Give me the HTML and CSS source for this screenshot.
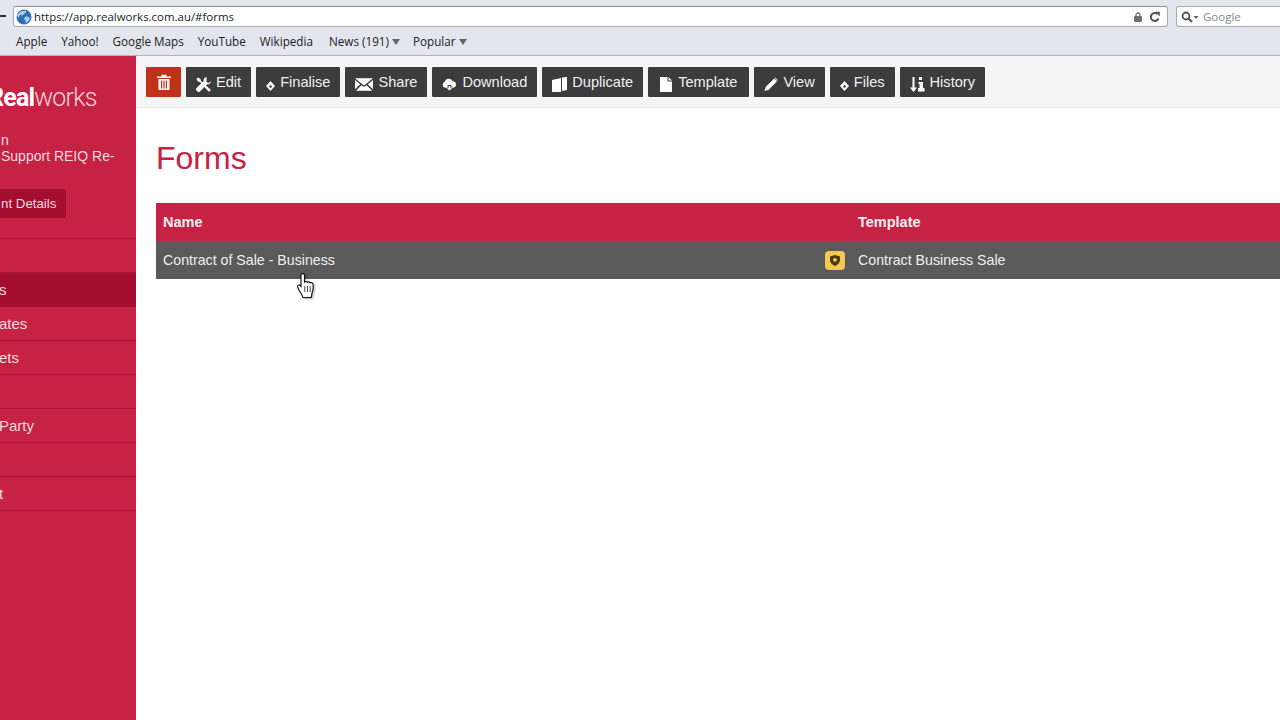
FILE: index.html
```html
<!DOCTYPE html>
<html lang="en">
<head>
<meta charset="utf-8">
<title>Forms</title>
<link rel="stylesheet" href="styles.css">
</head>
<body>
<header class="chrome">
  <div class="address-row">
    <span class="back"></span>
    <div class="urlbar">
      <svg class="globe" width="16" height="16" viewBox="0 0 16 16"><circle cx="8" cy="8" r="7.5" fill="#2f6fb5"/><path d="M3 4c2-2 5-2.500 7-2 1 1-1 2-2 3s-2 2-3 1-1 0-2 2-2-2-2-2zM9 8c2-1 4 0 5 1 0 2-2 4-4 5-1-1 0-2-1-3s-1-2 0-3z" fill="#a9cfee"/></svg>
      <span class="url">https://app.realworks.com.au/#forms</span>
      <span class="spacer"></span>
      <svg class="lock" width="8" height="10" viewBox="0 0 8 10"><rect x="0" y="4" width="8" height="6" rx="1" fill="#6f6f6f"/><path d="M2 4.500V3a2 2 0 0 1 4 0v1.500" fill="none" stroke="#6f6f6f" stroke-width="1.300"/></svg>
      <svg class="reload" width="12" height="12" viewBox="0 0 12 12"><path d="M9.500 7.500A4 4 0 1 1 8.500 3" fill="none" stroke="#555" stroke-width="2"/><path d="M6.500 0.500 11 1l-.5 4.500z" fill="#555"/></svg>
    </div>
    <div class="searchbar">
      <svg width="18" height="12" viewBox="0 0 18 12"><circle cx="5" cy="5" r="3.500" fill="none" stroke="#555" stroke-width="1.800"/><path d="M7.500 7.500 11 11" stroke="#555" stroke-width="2.200"/><path d="M12.500 5h5L15 8z" fill="#666"/></svg>
      <span>Google</span>
    </div>
  </div>
  <nav class="bookmarks">
    <a>Apple</a><a>Yahoo!</a><a>Google Maps</a><a>YouTube</a><a>Wikipedia</a>
    <a class="menu news">News (191)<i class="caret"></i></a><a class="menu">Popular<i class="caret"></i></a>
  </nav>
</header>

<div class="app">
  <aside class="sidebar">
    <div class="logo"><b>Real</b>works</div>
    <div class="account">
      <div>n</div>
      <div>Support REIQ Re-</div>
    </div>
    <a class="details">nt Details</a>
    <ul class="side-nav">
      <li></li>
      <li class="active">s</li>
      <li>ates</li>
      <li>ets</li>
      <li></li>
      <li>Party</li>
      <li></li>
      <li>t</li>
    </ul>
  </aside>

  <main class="main">
    <div class="toolbar">
      <button class="btn danger" aria-label="Delete">
        <svg width="14" height="16" viewBox="0 0 14 16"><path d="M0 2.500h14V4H0zM4.500 2.500V.8h5v1.700" fill="#fff"/><path d="M1.500 5h11v11h-11zM4 6.500v8h1.200v-8zM6.400 6.500v8h1.200v-8zM8.800 6.500v8H10v-8z" fill="#fff" fill-rule="evenodd"/></svg>
      </button>
      <button class="btn">
        <svg class="low" width="15" height="15" viewBox="0 0 15 15"><path d="M0.500 2 2 .5l2.500 1.500.5 2L14.500 12.500v1l-1 1h-1L4 5 2 4.500z" fill="#fff"/><path d="M10.500 0c-2 .3-3.200 2-2.800 4L.5 11c-.7.700-.7 1.800 0 2.500l1 1c.7.700 1.800.700 2.500 0L11 7.300c2 .4 3.700-.8 4-2.800l-2.500 1.500-2-1V3z" fill="#fff"/></svg>
        Edit
      </button>
      <button class="btn">
        <svg class="tiny" width="9" height="10" viewBox="0 0 9 10"><path d="M4.500 0 9 5 4.500 10 0 5z" fill="#fff"/><circle cx="4.500" cy="5.500" r="1.300" fill="#3c3c3c"/></svg>
        Finalise
      </button>
      <button class="btn">
        <svg width="18" height="13" viewBox="0 0 19 13" class="low"><path d="M0 0h19L9.500 7.500zM0 1.800l5.500 4.500L0 11.500zM19 1.800l-5.500 4.500 5.500 5.200zM6.800 7.200l2.700 2 2.700-2 6 5.800H1z" fill="#fff"/></svg>
        Share
      </button>
      <button class="btn">
        <svg width="15" height="13" viewBox="0 0 16 13" class="low"><path d="M3.500 10A3.300 3.300 0 0 1 3 3.600 4.500 4.500 0 0 1 11.500 3 3.600 3.600 0 0 1 12.500 10H10V7H6v3z" fill="#fff"/><path d="M7 8h2v2.500h2L8 13l-3-2.500h2z" fill="#fff"/></svg>
        Download
      </button>
      <button class="btn">
        <svg width="15" height="15" viewBox="0 0 15 15" class="low"><path d="M0 3 9 1v14H0z" fill="#fff"/><path d="M10 .5l5-.5v13l-5 1z" fill="#fff"/></svg>
        Duplicate
      </button>
      <button class="btn wide">
        <svg width="12" height="15" viewBox="0 0 12 15" class="low"><path d="M0 0h7.500v4.500H12V15H0zM8.500 0 12 3.500H8.500z" fill="#fff"/></svg>
        Template
      </button>
      <button class="btn">
        <svg width="14" height="15" viewBox="0 0 15 15" class="low"><path d="M11 1l3 3-9 9-4.500 1.500L2 10zM12 0l3 3-.5.500-3-3z" fill="#fff"/></svg>
        View
      </button>
      <button class="btn">
        <svg class="tiny" width="9" height="10" viewBox="0 0 9 10"><path d="M4.500 0 9 5 4.500 10 0 5z" fill="#fff"/><circle cx="4.500" cy="5.500" r="1.300" fill="#3c3c3c"/></svg>
        Files
      </button>
      <button class="btn">
        <svg width="15" height="15" viewBox="0 0 15 15" class="low"><path d="M2.500 0h2v10.500H7L3.500 15 0 10.500h2.500z" fill="#fff"/><path d="M9 0h3v3H9zM8.500 5H13v6h1.500v3.500H8V11h1.500V7h-1z" fill="#fff"/></svg>
        History
      </button>
    </div>

    <section class="content">
      <h1>Forms</h1>
      <div class="table">
        <div class="table-head">
          <div class="cell">Name</div>
          <div class="cell">Template</div>
        </div>
        <div class="table-row">
          <div class="cell name-cell">
            <span>Contract of Sale - Business</span>
            <span class="badge">
              <svg width="10" height="11" viewBox="0 0 10 11"><path d="M5 0 10 1.500V5c0 3-2.500 5-5 6C2.500 10 0 8 0 5V1.500z" fill="#4a3a10"/><circle cx="5" cy="4.800" r="1.900" fill="#f3c950"/></svg>
            </span>
          </div>
          <div class="cell">Contract Business Sale</div>
        </div>
      </div>
    </section>
  </main>
</div>

<svg class="pointer" width="18" height="26" viewBox="0 0 18 26"><path d="M4 1.500c.8-1.300 3-1.300 3.500.5V9c1-.8 2.200-.6 2.800.3.900-.7 2.200-.5 2.700.5 1-.5 2.800 0 3 1.500.3 3 .2 6.200-1 8.700l-.7 4.500H6c-.5-2.500-2-4-3.500-6.500C1.500 16 0 14 .8 12.500c.8-1 2-.5 3.200 1z" fill="#fff" stroke="#111" stroke-width="1.100"/><path d="M7.800 13v6M10.500 13v6M13.200 13v6" stroke="#333" stroke-width=".9"/></svg>
</body>
</html>
```

FILE: styles.css
```css
* { box-sizing: border-box; }
html, body { margin: 0; height: 100%; overflow: hidden; }
body {
  width: 1280px;
  height: 720px;
  display: flex;
  flex-direction: column;
  font-family: "Liberation Sans", Arial, sans-serif;
  background: #fff;
  position: relative;
}

/* Browser chrome */
.chrome {
  height: 56px;
  flex: none;
  background: #e4e6ef;
  border-bottom: 1px solid #b4b5bb;
  padding-top: 6px;
}
.address-row {
  height: 21px;
  display: flex;
  align-items: stretch;
}
.back {
  width: 6px;
  height: 2px;
  margin-top: 9px;
  background: #333;
  flex: none;
}
.urlbar {
  margin-left: 7px;
  width: 1155px;
  background: #fff;
  border: 1px solid #a9aab0;
  border-top-color: #8f9095;
  border-radius: 3px;
  display: flex;
  align-items: center;
  padding: 0 6px 0 2px;
  font: 11.450px "Open Sans", sans-serif;
  color: #222;
}
.globe { margin-right: 2px; flex: none; }
.spacer { flex: 1; }
.lock { margin-right: 7px; }
.searchbar {
  margin-left: 8px;
  flex: 1;
  background: #fff;
  border: 1px solid #a9aab0;
  border-right: 0;
  border-radius: 3px 0 0 3px;
  display: flex;
  align-items: center;
  gap: 4px;
  padding-left: 4px;
  font: 11.500px "Open Sans", sans-serif;
  color: #85878c;
}
.bookmarks {
  height: 28px;
  display: flex;
  align-items: center;
  padding-left: 16px;
  gap: 14px;
  font: 11.700px "Open Sans", sans-serif;
  color: #222;
}
.bookmarks .news { margin-left: 2px; margin-right: -1px; }
.caret {
  display: inline-block;
  width: 0;
  height: 0;
  margin-left: 3px;
  border: 4px solid transparent;
  border-top: 6px solid #666;
  border-bottom: 0;
  vertical-align: 1px;
}

/* App */
.app { flex: 1; display: flex; min-height: 0; }
.sidebar {
  width: 136px;
  flex: none;
  background: #c62243;
  color: #fbe3e8;
  overflow: hidden;
}
.logo {
  margin: 29px 0 0 -12px;
  font: 300 25px/26px Roboto, sans-serif;
  letter-spacing: -0.8px;
  white-space: nowrap;
  color: #f6d3da;
}
.logo b { font-weight: 700; color: #fff; }
.account {
  margin-top: 21px;
  font-size: 14px;
  line-height: 16px;
  padding-left: 1px;
  color: #f7d9df;
}
.details {
  display: block;
  width: 66px;
  height: 29px;
  margin-top: 25px;
  background: #a30d30;
  border-radius: 0 2px 2px 0;
  font-size: 13.300px;
  line-height: 29px;
  padding-left: 1px;
  white-space: nowrap;
  color: #f7d9df;
}
.side-nav {
  list-style: none;
  margin: 20px 0 0;
  padding: 0;
  border-top: 1px solid #ab1233;
}
.side-nav li {
  height: 34px;
  line-height: 34px;
  font-size: 15px;
  text-indent: -1px;
  border-bottom: 1px solid #ab1233;
  color: #f7d9df;
}
.side-nav li.active { background: #a30d30; border-bottom-color: #a30d30; }

/* Main */
.main { flex: 1; min-width: 0; overflow: hidden; }
.toolbar {
  height: 52px;
  background: #f5f5f5;
  border-bottom: 1px solid #ececec;
  padding: 11px 0 0 10px;
  display: flex;
  gap: 5px;
  align-items: flex-start;
}
.btn {
  height: 30px;
  display: flex;
  align-items: center;
  gap: 5px;
  padding: 0 10px;
  border: 0;
  border-radius: 1px;
  background: #3c3c3c;
  color: #f0f0f0;
  font: 14.600px "Liberation Sans", Arial, sans-serif;
  white-space: nowrap;
}
.btn.danger { width: 35px; justify-content: center; background: #c0311a; padding: 0; }
.btn.wide { padding: 0 12px; gap: 6px; }
.btn svg { flex: none; }
.btn svg.low { margin-top: 4px; }
.btn svg.tiny { margin-top: 7px; }

.content { padding: 32px 0 0 20px; }
h1 {
  margin: 0 0 26px;
  font-size: 32px;
  line-height: 37px;
  font-weight: 400;
  color: #c62243;
}
.table { font-size: 14.200px; }
.table-head, .table-row {
  display: grid;
  grid-template-columns: 695px 1fr;
  height: 38px;
  align-items: center;
}
.table-head { background: #c62243; color: #fdeef1; font-weight: 700; font-size: 14.500px; }
.table-row { background: #5a5a5a; color: #f0f0f0; }
.cell { padding: 0 7px; }
.name-cell { display: flex; justify-content: space-between; align-items: center; padding-right: 6px; }
.badge {
  width: 20px;
  height: 19px;
  border-radius: 4px;
  background: #f3c950;
  display: flex;
  align-items: center;
  justify-content: center;
}

/* Mouse pointer in the capture */
.pointer {
  position: absolute;
  left: 297px;
  top: 273px;
  filter: drop-shadow(1px 1px 1px rgba(0,0,0,.35));
}
```
